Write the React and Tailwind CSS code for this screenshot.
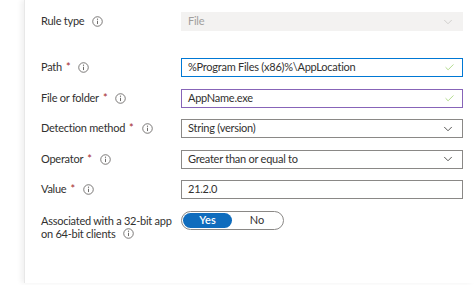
import { Check, ChevronDown } from 'lucide-react'

function Info() {
  return (
    <svg width="11" height="11" viewBox="0 0 12 12" className="shrink-0 text-[#605e5c]">
      <circle cx="6" cy="6" r="5.2" fill="none" stroke="currentColor" strokeWidth="0.9" />
      <line x1="6" y1="5.2" x2="6" y2="8.8" stroke="currentColor" strokeWidth="1" />
      <circle cx="6" cy="3.5" r="0.65" fill="currentColor" />
    </svg>
  )
}

function Label({ text, required }) {
  return (
    <div className="flex items-center gap-[8px] text-[11px] tracking-[-0.25px] text-[#323130]">
      <span>
        {text}
        {required && <span className="text-[#a4262c] ml-[4px]">*</span>}
      </span>
      <Info />
    </div>
  )
}

function Field({ value, border = 'border-[#8a8886]', check, chevron, disabled }) {
  return (
    <div
      className={`h-[19px] flex items-center justify-between pl-[6px] pr-[7px] text-[11px] tracking-[-0.25px] border ${border} ${
        disabled ? 'bg-[#f3f2f1] text-[#a19f9d] border-transparent' : 'bg-white text-[#323130]'
      }`}
    >
      <span>{value}</span>
      {check && <Check size={11} strokeWidth={1.3} className="text-[#7fc241]" />}
      {chevron && <ChevronDown size={14} strokeWidth={1.4} className={disabled ? 'text-[#c8c6c4]' : 'text-[#323130]'} />}
    </div>
  )
}

export default function App() {
  return (
    <div className="w-[474px] h-[285px] bg-white flex font-['Lato',sans-serif]">
      <div className="w-[24px] shrink-0 bg-white" />
      <div className="flex-1 h-[283px] border-l border-[#e8e8e8] shadow-[-3px_0_5px_rgba(0,0,0,0.06)] pl-[16px] pr-[11px] pt-[12px]">
        <div className="grid grid-cols-[140px_1fr] items-center">
          <Label text="Rule type" />
          <Field value="File" disabled chevron />
        </div>

        <div className="mt-[27px] flex flex-col gap-[11.5px]">
          <div className="grid grid-cols-[140px_1fr] items-center">
            <Label text="Path" required />
            <Field value="%Program Files (x86)%\AppLocation" border="border-[#0078d4]" check />
          </div>
          <div className="grid grid-cols-[140px_1fr] items-center">
            <Label text="File or folder" required />
            <Field value="AppName.exe" border="border-[#8764b8]" check />
          </div>
          <div className="grid grid-cols-[140px_1fr] items-center">
            <Label text="Detection method" required />
            <Field value="String (version)" chevron />
          </div>
          <div className="grid grid-cols-[140px_1fr] items-center">
            <Label text="Operator" required />
            <Field value="Greater than or equal to" chevron />
          </div>
          <div className="grid grid-cols-[140px_1fr] items-center">
            <Label text="Value" required />
            <Field value="21.2.0" />
          </div>
          <div className="grid grid-cols-[140px_1fr] items-start">
            <div className="text-[11px] tracking-[-0.25px] text-[#323130] leading-[13px] pt-[3px]">
              <div className="whitespace-nowrap">Associated with a 32-bit app</div>
              <div className="flex items-center gap-[8px]">
                <span>on 64-bit clients</span>
                <Info />
              </div>
            </div>
            <div className="w-[103px] h-[19px] rounded-full border border-[#8a8886] p-[1px] flex items-center text-[11px]">
              <div className="w-[49px] h-full rounded-full bg-[#0f6cbd] text-white flex items-center justify-center font-semibold">
                Yes
              </div>
              <div className="flex-1 flex items-center justify-center text-[#323130]">No</div>
            </div>
          </div>
        </div>
      </div>
    </div>
  )
}
